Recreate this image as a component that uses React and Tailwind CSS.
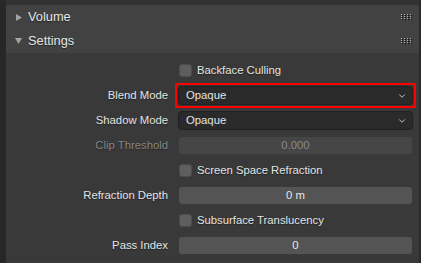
import { ChevronDown } from 'lucide-react'

const FONT = { fontFamily: '"Liberation Sans", Arial, sans-serif' }

function Grip() {
  const cols = [0, 3, 6, 9]
  const rows = [0, 2, 4]
  return (
    <svg width="12" height="7" className="mr-[6px]">
      {cols.map((x) =>
        rows.map((y) => (
          <g key={`${x}-${y}`}>
            <rect x={x + 1} y={y + 1} width="1" height="1" fill="#161616" />
            <rect x={x} y={y} width="1" height="1" fill="#b0b0b0" />
          </g>
        ))
      )}
    </svg>
  )
}

function Header({ label, open }) {
  return (
    <div className="flex h-[24px] items-center bg-[#424242]">
      <div className="flex w-[22px] justify-end pr-[6px]">
        {open ? (
          <svg width="7" height="6"><polygon points="0,0 7,0 3.5,6" fill="#a3a3a3" /></svg>
        ) : (
          <svg width="6" height="7"><polygon points="0,0 6,3.5 0,7" fill="#a3a3a3" /></svg>
        )}
      </div>
      <span className="flex-1 text-[12.8px] text-[#e6e6e6] [text-shadow:0_1px_1px_rgba(0,0,0,0.5)]">{label}</span>
      <Grip />
    </div>
  )
}

function Row({ label, dim, children }) {
  return (
    <div className="flex h-[25px] items-center">
      <div
        className={`w-[162px] text-right text-[11.3px] [text-shadow:0_1px_1px_rgba(0,0,0,0.4)] ${dim ? 'text-[#858585]' : 'text-[#e4e4e4]'}`}
      >
        {label}
      </div>
      <div className="ml-[10px] w-[235px]">{children}</div>
    </div>
  )
}

function Checkbox({ label }) {
  return (
    <Row label="">
      <div className="flex items-center gap-[5px] pl-[1px]">
        <div className="h-[13px] w-[13px] rounded-[3px] border border-[#4c4c4c] bg-[#5e5e5e]" />
        <span className="text-[11.3px] text-[#e4e4e4] [text-shadow:0_1px_1px_rgba(0,0,0,0.4)]">{label}</span>
      </div>
    </Row>
  )
}

function Dropdown({ value }) {
  return (
    <div className="flex h-[19px] items-center justify-between rounded-[4px] border border-[#1f1f1f] bg-[#2a2a2a] pl-[7px] pr-[5px] text-[11.3px] text-[#e4e4e4]">
      <span>{value}</span>
      <ChevronDown size={10} strokeWidth={2.2} className="text-[#cfcfcf]" />
    </div>
  )
}

function NumField({ value, dim }) {
  return (
    <div
      className={`flex h-[19px] items-center justify-center rounded-[4px] border border-[#3a3a3a] text-[11.3px] ${dim ? 'bg-[#464646] text-[#8a8a8a]' : 'bg-[#545454] text-[#e6e6e6]'}`}
    >
      {value}
    </div>
  )
}

export default function App() {
  return (
    <div className="flex h-[263px] w-[421px] overflow-hidden bg-[#393939]" style={FONT}>
      <div className="w-[6px] bg-[#272727]" />
      <div className="flex flex-1 flex-col">
        <div className="h-[5px] bg-[#323232]" />
        <Header label="Volume" />
        <Header label="Settings" open />
        <div className="pt-[5px]">
          <Checkbox label="Backface Culling" />
          <Row label="Blend Mode">
            <div className="-mx-[3px] -my-[3px] border-2 border-[#ff0000] p-[1px]">
              <Dropdown value="Opaque" />
            </div>
          </Row>
          <Row label="Shadow Mode">
            <Dropdown value="Opaque" />
          </Row>
          <Row label="Clip Threshold" dim>
            <NumField value="0.000" dim />
          </Row>
          <Checkbox label="Screen Space Refraction" />
          <Row label="Refraction Depth">
            <NumField value="0 m" />
          </Row>
          <Checkbox label="Subsurface Translucency" />
          <Row label="Pass Index">
            <NumField value="0" />
          </Row>
        </div>
      </div>
      <div className="w-[2px] bg-[#2a2a2a]" />
    </div>
  )
}
